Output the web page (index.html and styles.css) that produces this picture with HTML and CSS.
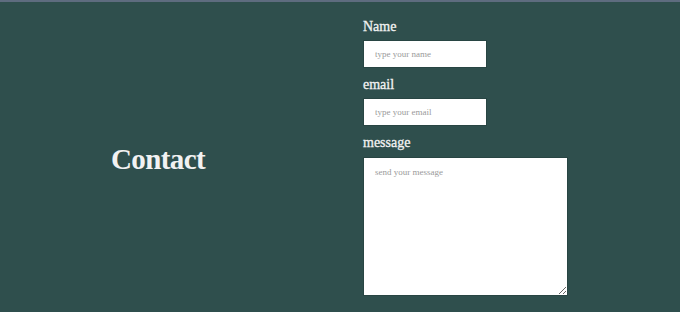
FILE: index.html
```html
<!DOCTYPE html>
<html lang="en">
<head>
    <meta charset="UTF-8">
    <meta name="viewport" content="width=device-width, initial-scale=1.0">
    <title>Contact</title>
    <link rel="stylesheet" href="styles.css">
</head>
<body>
    <div class="contact">
        <div class="contact-title">
            <h1>Contact</h1>
        </div>

        <form class="contact-form">
            <label for="name">Name</label>
            <input type="text" id="name" placeholder="type your name">

            <label for="email">email</label>
            <input type="email" id="email" placeholder="type your email">

            <label for="message">message</label>
            <textarea id="message" placeholder="send your message"></textarea>
        </form>
    </div>
</body>
</html>
```

FILE: styles.css
```css
body {
    margin: 0;
    min-height: 100vh;
    background-color: #2f4f4d;
    border-top: 2px solid #5e6c7f;
    font-family: "Liberation Serif", "DejaVu Serif", serif;
    color: #f2f2f2;
    box-sizing: border-box;
}

.contact {
    display: flex;
}

.contact-title {
    width: 316px;
    display: flex;
    justify-content: center;
    align-items: center;
    padding-top: 4px;
}

.contact-title h1 {
    margin: 0;
    font-size: 29px;
    font-weight: bold;
    letter-spacing: -0.6px;
}

.contact-form {
    display: flex;
    flex-direction: column;
    align-items: flex-start;
    padding: 16px 0 16px 47px;
}

.contact-form label {
    font-size: 14px;
    line-height: 18px;
    margin-bottom: 4px;
    -webkit-text-stroke: 0.3px #f2f2f2;
}

.contact-form input,
.contact-form textarea {
    box-sizing: border-box;
    border: 1px solid #284543;
    background: #fff;
    font-family: inherit;
    font-size: 9px;
    padding: 0 11px;
    margin: 0 0 8px 0;
    outline: none;
}

.contact-form input {
    width: 124px;
    height: 28px;
}

.contact-form textarea {
    width: 205px;
    height: 139px;
    padding-top: 9px;
    margin: 1px 0 0 0;
}

.contact-form ::placeholder {
    color: #9a9a9a;
}
```
